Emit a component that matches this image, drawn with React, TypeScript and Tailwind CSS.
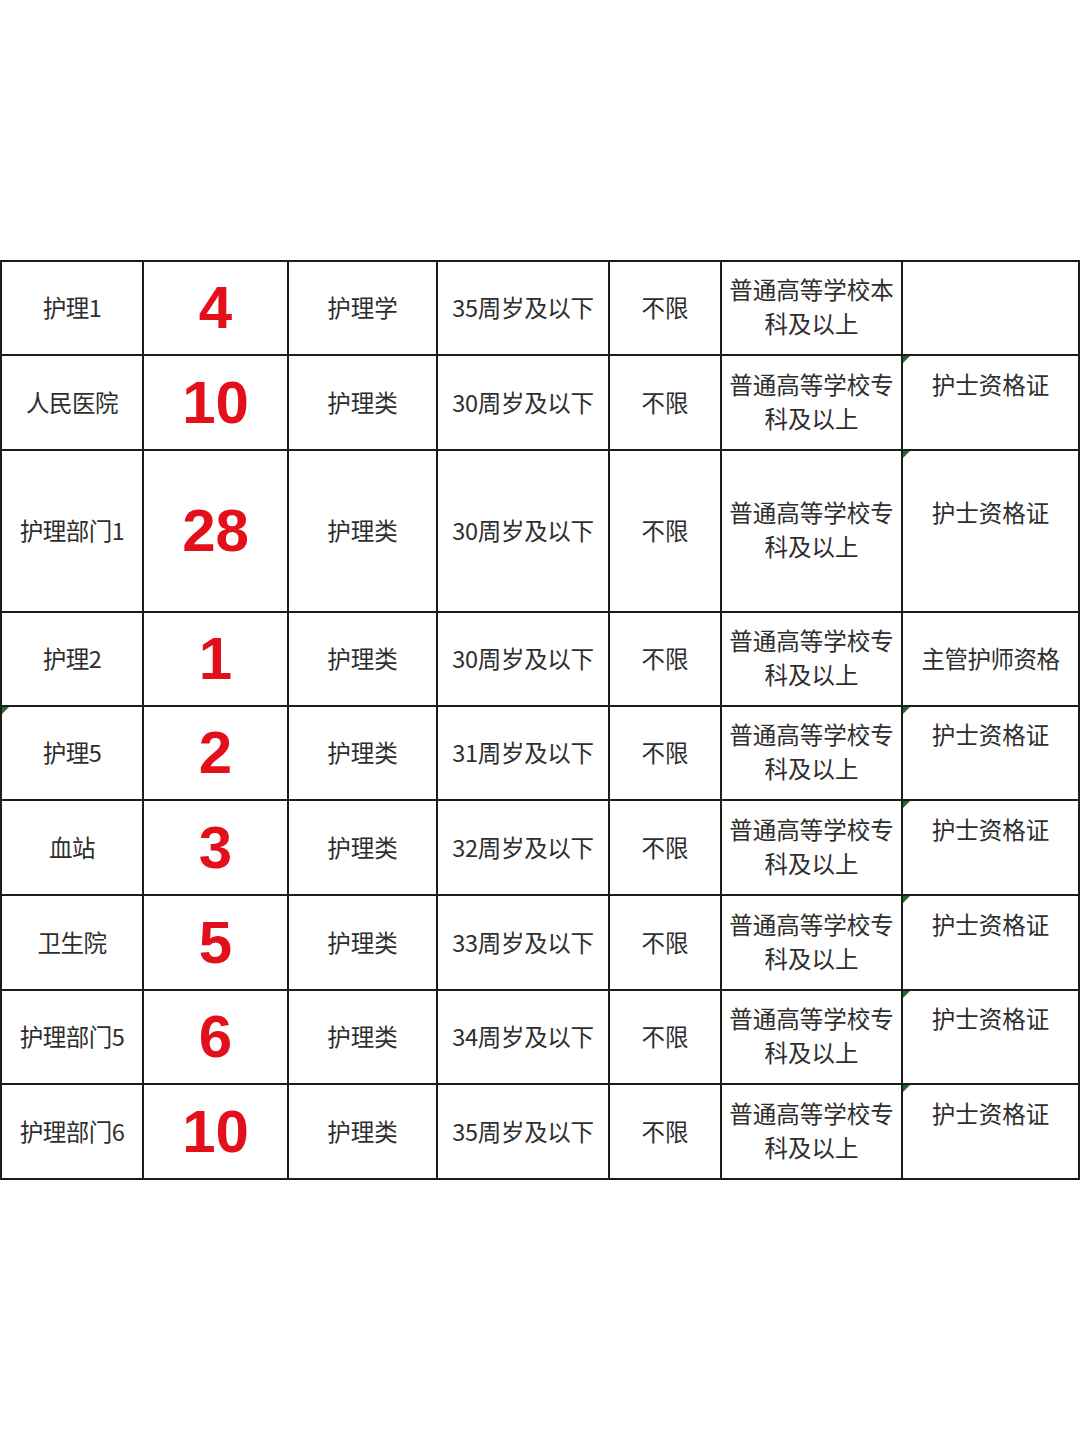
import React from 'react';

type Row = {
  name: string;
  count: string;
  major: string;
  age: string;
  edu: string;
  cert: string;
  certCentered?: boolean;
  h: string;
  markName?: boolean;
  markCert?: boolean;
};

const rows: Row[] = [
  { name: '护理1', count: '4', major: '护理学', age: '35周岁及以下', edu: '普通高等学校本', cert: '', h: 'h-[92px]' },
  { name: '人民医院', count: '10', major: '护理类', age: '30周岁及以下', edu: '普通高等学校专', cert: '护士资格证', h: 'h-[93px]', markCert: true },
  { name: '护理部门1', count: '28', major: '护理类', age: '30周岁及以下', edu: '普通高等学校专', cert: '护士资格证', h: 'h-[160px]', markCert: true },
  { name: '护理2', count: '1', major: '护理类', age: '30周岁及以下', edu: '普通高等学校专', cert: '主管护师资格', certCentered: true, h: 'h-[92px]' },
  { name: '护理5', count: '2', major: '护理类', age: '31周岁及以下', edu: '普通高等学校专', cert: '护士资格证', h: 'h-[92px]', markName: true, markCert: true },
  { name: '血站', count: '3', major: '护理类', age: '32周岁及以下', edu: '普通高等学校专', cert: '护士资格证', h: 'h-[93px]', markCert: true },
  { name: '卫生院', count: '5', major: '护理类', age: '33周岁及以下', edu: '普通高等学校专', cert: '护士资格证', h: 'h-[93px]', markCert: true },
  { name: '护理部门5', count: '6', major: '护理类', age: '34周岁及以下', edu: '普通高等学校专', cert: '护士资格证', h: 'h-[92px]', markCert: true },
  { name: '护理部门6', count: '10', major: '护理类', age: '35周岁及以下', edu: '普通高等学校专', cert: '护士资格证', h: 'h-[93px]', markCert: true },
];

// small green corner flag, like the spreadsheet comment marker
const Mark = () => (
  <span className="absolute left-0 top-0 w-0 h-0 border-t-[7px] border-r-[7px] border-t-[#1f6b2a] border-r-transparent" />
);

const Cell: React.FC<{ children?: React.ReactNode; mark?: boolean }> = ({ children, mark }) => (
  <div className="relative bg-white flex items-center justify-center text-center">
    {mark && <Mark />}
    {children}
  </div>
);

export default function App() {
  return (
    <div
      className="w-[1080px] h-[1440px] bg-white pt-[260px] text-[#2e2e2e]"
      style={{ fontFamily: '"Noto Sans CJK SC", "Liberation Sans", sans-serif' }}
    >
      <div className="grid grid-cols-[140px_143px_147px_170px_110px_179px_175px] gap-[2px] p-[2px] bg-[#1c1c1c]">
        {rows.map((r, i) => (
          <React.Fragment key={i}>
            <div className={`relative bg-white flex items-center justify-center ${r.h}`}>
              {r.markName && <Mark />}
              <span className="text-[23.5px] leading-none tracking-[-0.5px]">{r.name}</span>
            </div>
            <Cell>
              <span
                className="text-[60px] font-bold leading-none text-[#e3101b]"
                style={{ fontFamily: '"Liberation Sans", Arial, sans-serif' }}
              >
                {r.count}
              </span>
            </Cell>
            <Cell>
              <span className="text-[23.5px] leading-none">{r.major}</span>
            </Cell>
            <Cell>
              <span className="text-[23.5px] leading-none tracking-[-0.3px]">{r.age}</span>
            </Cell>
            <Cell>
              <span className="text-[23.5px] leading-none">不限</span>
            </Cell>
            <Cell>
              <div className="text-[23.5px] leading-[34px] mb-[4px]">
                <div>{r.edu}</div>
                <div>科及以上</div>
              </div>
            </Cell>
            <Cell mark={r.markCert}>
              {r.cert &&
                (r.certCentered ? (
                  <span className="text-[23.5px] leading-none tracking-[-0.5px]">{r.cert}</span>
                ) : (
                  <div className="text-[23.5px] leading-[34px] mb-[4px]">
                    <div>{r.cert}</div>
                    <div>&nbsp;</div>
                  </div>
                ))}
            </Cell>
          </React.Fragment>
        ))}
      </div>
    </div>
  );
}
